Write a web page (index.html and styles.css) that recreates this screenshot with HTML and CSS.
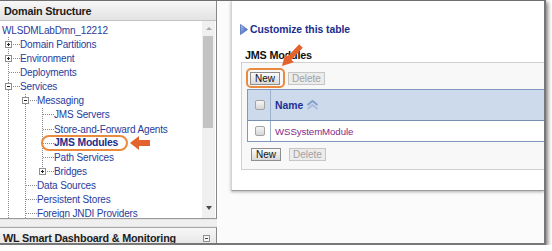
FILE: index.html
```html
<!DOCTYPE html>
<html lang="en">
<head>
  <meta charset="UTF-8" />
  <title>JMS Modules</title>
  <link rel="stylesheet" href="styles.css">
</head>
<body>
  <div class="frame">

    <div class="side">
      <section class="panel tree-panel">
        <div class="phead">Domain Structure</div>
        <div class="tree-wrap">
          <div class="tree">
            <div class="row root"><a>WLSDMLabDmn_12212</a></div>
            <div class="row"><span class="own"><i class="exp plus"></i></span><a>Domain Partitions</a></div>
            <div class="row"><span class="own"><i class="exp plus"></i></span><a>Environment</a></div>
            <div class="row"><span class="own"></span><a>Deployments</a></div>
            <div class="row"><span class="own"><i class="exp"></i></span><a>Services</a></div>
            <div class="row"><span class="g"></span><span class="own"><i class="exp"></i></span><a>Messaging</a></div>
            <div class="row"><span class="g"></span><span class="g"></span><span class="own"></span><a>JMS Servers</a></div>
            <div class="row"><span class="g"></span><span class="g"></span><span class="own"></span><a>Store-and-Forward Agents</a></div>
            <div class="row"><span class="g"></span><span class="g"></span><span class="own"></span><a class="current hl">JMS Modules</a>
              <svg class="pointer" width="20" height="14" viewBox="0 0 20 14"><polygon points="0,7 9,0 9,4 20,4 20,10 9,10 9,14" fill="#e3622e"/></svg>
            </div>
            <div class="row"><span class="g"></span><span class="g"></span><span class="own"></span><a>Path Services</a></div>
            <div class="row"><span class="g"></span><span class="g"></span><span class="own last"><i class="exp plus"></i></span><a>Bridges</a></div>
            <div class="row"><span class="g"></span><span class="own"></span><a>Data Sources</a></div>
            <div class="row"><span class="g"></span><span class="own"></span><a>Persistent Stores</a></div>
            <div class="row"><span class="g"></span><span class="own"></span><a>Foreign JNDI Providers</a></div>
          </div>
          <div class="sbar">
            <div class="sb-btn"><i class="tri-up"></i></div>
            <div class="sb-thumb"></div>
            <div class="sb-track"></div>
            <div class="sb-btn sb-down"><i class="tri-down"></i></div>
          </div>
        </div>
      </section>

      <section class="panel dash-panel">
        <div class="phead">WL Smart Dashboard &amp; Monitoring<i class="collapse"></i></div>
      </section>
    </div>

    <div class="main">
      <div class="box">
        <div class="customize">
          <svg width="8" height="11" viewBox="0 0 8 11">
            <defs>
              <linearGradient id="tri" x1="0" y1="0" x2="1" y2="1">
                <stop offset="0" stop-color="#a9c2ee"/>
                <stop offset="1" stop-color="#2f58b0"/>
              </linearGradient>
            </defs>
            <polygon points="0.5,0.5 7.5,5.5 0.5,10.5" fill="url(#tri)" stroke="#4a6cb6" stroke-width="0.8"/>
          </svg>
          <a>Customize this table</a>
        </div>

        <h2 class="tbl-title">JMS Modules</h2>

        <div class="fieldset">
          <div class="toolbar">
            <button class="btn ringed">New</button>
            <button class="btn off">Delete</button>
          </div>

          <div class="table">
            <div class="thead">
              <div class="cb-cell"><i class="cb"></i></div>
              <div class="name-cell">Name
                <svg class="sort" width="13" height="10" viewBox="0 0 13 10">
                  <polyline points="1.5,5 6.5,1 11.5,5" fill="none" stroke="#86a0cc" stroke-width="2"/>
                  <polyline points="1.5,9 6.5,5 11.5,9" fill="none" stroke="#a9bbdc" stroke-width="2"/>
                </svg>
              </div>
            </div>
            <div class="trow">
              <div class="cb-cell"><i class="cb"></i></div>
              <div class="name-cell"><a class="visited">WSSystemModule</a></div>
            </div>
          </div>

          <div class="toolbar bottom">
            <button class="btn">New</button>
            <button class="btn off">Delete</button>
          </div>
        </div>

        <svg class="callout" width="26" height="24" viewBox="0 0 26 24">
          <polygon points="4,22 15.9,18.2 13.4,15.7 24.8,3.7 21.2,0.3 9.8,12.3 7.2,9.9" fill="#e3622e"/>
        </svg>
      </div>
    </div>

  </div>
</body>
</html>
```

FILE: styles.css
```css
:root {
  --link: #283c9c;
  --navy: #1b2d8e;
  --orange: #e98a3e;
  --dot: #8a8a8a;
  --grid: #7f98bb;
}

body {
  margin: 0;
  background: #fff;
  font-family: "Liberation Sans", Arial, sans-serif;
  font-size: 10px;
  color: #111;
}

a {
  color: var(--link);
  text-decoration: none;
}

.frame {
  width: 546px;
  height: 245px;
  box-sizing: border-box;
  border-top: 1px solid #6f6f6f;
  border-right: 2px solid #777;
  border-bottom: 2px solid #777;
  box-shadow: 2px 2px 4px rgba(0, 0, 0, 0.5);
  display: flex;
  overflow: hidden;
  background: #fafafa;
}

/* ---------- left column ---------- */

.side {
  width: 217px;
  flex: none;
  display: flex;
  flex-direction: column;
  gap: 8px;
  background: #efefef;
}

.panel {
  flex: none;
  background: #fff;
  border-right: 1px solid #888;
  box-shadow: 1px 0 1px rgba(0, 0, 0, 0.25);
}

.tree-panel {
  border-bottom: 1px solid #999;
}

.dash-panel {
  border-top: 1px solid #a8a8a8;
}

.phead {
  height: 19px;
  border-bottom: 1px solid #c4c4c4;
  background: linear-gradient(#f7f7f7, #e3e3e3);
  display: flex;
  align-items: center;
  justify-content: space-between;
  padding: 0 6px 0 4px;
  font-size: 10.8px;
  font-weight: bold;
  letter-spacing: -0.2px;
  color: #1c1c1c;
}

.dash-panel .phead {
  padding-left: 3px;
}

.collapse {
  width: 7px;
  height: 7px;
  box-sizing: border-box;
  border: 1px solid #8f8f8f;
  background: linear-gradient(#444, #444) center / 3px 1px no-repeat, #f4f4f4;
  margin-top: 2px;
}

.tree-wrap {
  height: 197px;
  display: flex;
}

.tree {
  flex: 1;
  padding-top: 2px;
  overflow: hidden;
}

.row {
  height: 14.15px;
  display: flex;
  align-items: center;
  white-space: nowrap;
  letter-spacing: -0.15px;
}

.row.root {
  padding-left: 2px;
}

.g,
.own {
  align-self: stretch;
  flex: none;
  background-repeat: no-repeat;
}

.g {
  width: 17px;
  background-image: repeating-linear-gradient(to bottom, var(--dot) 0 1px, transparent 1px 2px);
  background-size: 1px 100%;
  background-position: 8px 0;
}

.own {
  width: 20px;
  display: flex;
  align-items: center;
  background-image:
    repeating-linear-gradient(to bottom, var(--dot) 0 1px, transparent 1px 2px),
    repeating-linear-gradient(to right, var(--dot) 0 1px, transparent 1px 2px);
  background-size: 1px 100%, 11px 1px;
  background-position: 8px 0, 9px 50%;
}

.own.last {
  background-size: 1px 50%, 11px 1px;
}

.exp {
  width: 7px;
  height: 7px;
  box-sizing: border-box;
  margin-left: 5px;
  border: 1px solid #8f8f8f;
  background: linear-gradient(#222, #222) center / 3px 1px no-repeat, #fff;
}

.exp.plus {
  background:
    linear-gradient(#222, #222) center / 3px 1px no-repeat,
    linear-gradient(#222, #222) center / 1px 3px no-repeat,
    #fff;
}

.current {
  font-weight: bold;
  font-size: 10.4px;
  letter-spacing: -0.2px;
  color: var(--navy);
  line-height: 12px;
}

.hl {
  position: relative;
}

.hl::after {
  content: "";
  position: absolute;
  left: -13px;
  right: -10px;
  top: -2px;
  bottom: -2px;
  border: 2px solid var(--orange);
  border-radius: 8px;
}

.pointer {
  margin-left: 12px;
  flex: none;
}

/* scrollbar */

.sbar {
  width: 13px;
  flex: none;
  display: flex;
  flex-direction: column;
  background: #f0f0f0;
  margin-right: 1px;
}

.sb-btn {
  height: 15px;
  display: flex;
  align-items: center;
  justify-content: center;
}

.sb-down {
  margin-bottom: 3px;
}

.tri-up {
  border-left: 3px solid transparent;
  border-right: 3px solid transparent;
  border-bottom: 3px solid #a9a9a9;
}

.tri-down {
  border-left: 3.5px solid transparent;
  border-right: 3.5px solid transparent;
  border-top: 4px solid #4a4a4a;
}

.sb-thumb {
  height: 92px;
  margin: 0 2px 0 1px;
  background: #c3c3c3;
}

.sb-track {
  flex: 1;
}

/* ---------- right content ---------- */

.main {
  flex: 1;
  padding-left: 14px;
  background: #fbfbfb;
  min-width: 0;
}

.box {
  position: relative;
  background: #fff;
  border-left: 1px solid #d4d4d4;
  border-bottom: 1px solid #9c9c9c;
  box-shadow: 0 1px 3px rgba(0, 0, 0, 0.3);
  padding: 0 0 20px 8px;
  overflow: hidden;
}

.customize {
  margin-top: 22px;
  height: 12px;
  display: flex;
  align-items: center;
  gap: 2px;
}

.customize a {
  font-size: 10.4px;
  font-weight: bold;
  letter-spacing: -0.05px;
  color: var(--navy);
}

.tbl-title {
  margin: 14px 0 0;
  padding-left: 5px;
  height: 12px;
  line-height: 12px;
  font-size: 10.8px;
  letter-spacing: -0.2px;
  color: #111;
}

.fieldset {
  width: 420px;
  margin: 1px 0 0 1px;
  border: 1px solid #d0d0d0;
  background: #f8f8f8;
  padding: 9px 0 8px 5px;
}

.toolbar {
  display: flex;
  gap: 8px;
  margin-left: 3px;
}

.toolbar.bottom {
  margin-top: 6px;
  margin-left: 4px;
}

.btn {
  height: 13px;
  padding: 0 4px;
  border: 1px solid #8e8e8e;
  background: linear-gradient(#fbfbfb, #d9d9d9);
  font-family: "Liberation Sans", Arial, sans-serif;
  font-size: 10px;
  line-height: 11px;
  color: #111;
}

.btn.off {
  padding: 0 3px;
  border-color: #c6c6c6;
  background: #ececec;
  color: #a2a2a2;
}

.ringed {
  position: relative;
}

.ringed::after {
  content: "";
  position: absolute;
  left: -5px;
  right: -6px;
  top: -5px;
  bottom: -4px;
  border: 2px solid var(--orange);
  border-radius: 5px;
}

.table {
  margin-top: 4px;
  border: 1px solid var(--grid);
}

.thead,
.trow {
  display: flex;
  align-items: stretch;
}

.thead {
  height: 30px;
  background: #cddaeb;
  border-bottom: 1px solid #7690b4;
}

.trow {
  height: 20px;
  background: #fff;
}

.cb-cell {
  width: 23px;
  border-right: 1px solid #9fb2cd;
  display: flex;
  align-items: center;
  padding-left: 7px;
  box-sizing: border-box;
}

.cb {
  width: 10px;
  height: 10px;
  box-sizing: border-box;
  border: 1px solid #a3a3a3;
  border-radius: 2px;
  background: linear-gradient(#f6f6f6, #d6d6d6);
}

.name-cell {
  display: flex;
  align-items: center;
  gap: 3px;
  padding-left: 4px;
}

.thead .name-cell {
  font-size: 10.4px;
  font-weight: bold;
  color: #1f2f9a;
}

.visited {
  color: #862a8c;
  font-size: 9.7px;
  letter-spacing: -0.1px;
}

.callout {
  position: absolute;
  left: 46px;
  top: 43px;
}
```
